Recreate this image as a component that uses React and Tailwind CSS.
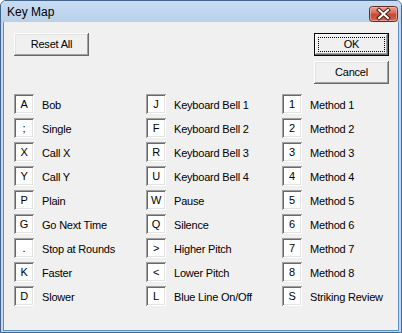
const columns = [
  [
    ['A', 'Bob'],
    [';', 'Single'],
    ['X', 'Call X'],
    ['Y', 'Call Y'],
    ['P', 'Plain'],
    ['G', 'Go Next Time'],
    ['.', 'Stop at Rounds'],
    ['K', 'Faster'],
    ['D', 'Slower'],
  ],
  [
    ['J', 'Keyboard Bell 1'],
    ['F', 'Keyboard Bell 2'],
    ['R', 'Keyboard Bell 3'],
    ['U', 'Keyboard Bell 4'],
    ['W', 'Pause'],
    ['Q', 'Silence'],
    ['>', 'Higher Pitch'],
    ['<', 'Lower Pitch'],
    ['L', 'Blue Line On/Off'],
  ],
  [
    ['1', 'Method 1'],
    ['2', 'Method 2'],
    ['3', 'Method 3'],
    ['4', 'Method 4'],
    ['5', 'Method 5'],
    ['6', 'Method 6'],
    ['7', 'Method 7'],
    ['8', 'Method 8'],
    ['S', 'Striking Review'],
  ],
];

const colWidths = ['w-[132px]', 'w-[136px]', 'flex-1'];

function CloseButton() {
  return (
    <svg width="29" height="16" viewBox="0 0 29 16">
      <defs>
        <linearGradient id="cb" x1="0" y1="0" x2="0" y2="1">
          <stop offset="0" stopColor="#e8a799" />
          <stop offset="0.45" stopColor="#d46a58" />
          <stop offset="0.5" stopColor="#c5462f" />
          <stop offset="1" stopColor="#cf6a55" />
        </linearGradient>
      </defs>
      <rect x="0.5" y="0.5" width="28" height="15" rx="3" fill="url(#cb)" stroke="#6b2a22" />
      <rect x="1.5" y="1.5" width="26" height="13" rx="2" fill="none" stroke="#f2c2b6" strokeOpacity="0.6" />
      {/* X glyph with dark outline */}
      <path d="M10 4 L19 12 M19 4 L10 12" stroke="#4a1c16" strokeWidth="4" strokeLinecap="square" />
      <path d="M10 4 L19 12 M19 4 L10 12" stroke="#ffffff" strokeWidth="2" strokeLinecap="square" />
    </svg>
  );
}

function Button({ children, isDefault = false }) {
  if (isDefault) {
    return (
      <div className="w-[75px] h-[23px] border border-black bg-[#f0f0f0] shadow-[inset_-1px_-1px_#696969,inset_1px_1px_#fff,inset_-2px_-2px_#a0a0a0] p-[3px]">
        <div className="w-full h-full border border-dotted border-black flex items-center justify-center">
          {children}
        </div>
      </div>
    );
  }
  return (
    <div className="w-[75px] h-[23px] bg-[#f0f0f0] shadow-[inset_-1px_-1px_#696969,inset_1px_1px_#fff,inset_-2px_-2px_#a0a0a0,inset_2px_2px_#e3e3e3] flex items-center justify-center">
      {children}
    </div>
  );
}

function KeyRow({ k, label }) {
  return (
    <div className="flex items-center h-[20px]">
      <div className="w-[20px] h-[20px] bg-white shadow-[inset_1px_1px_#a0a0a0,inset_-1px_-1px_#fff,inset_2px_2px_#696969,inset_-2px_-2px_#e3e3e3] flex items-center justify-center pt-[1px]">
        {k}
      </div>
      <span className="ml-[8px] pt-[2px] whitespace-nowrap">{label}</span>
    </div>
  );
}

export default function App() {
  return (
    <div className="w-[402px] h-[333px] flex flex-col rounded-t-[6px] border border-[#44648c] bg-[#c3d7ee] font-['Liberation_Sans',Arial,sans-serif] text-[11px] text-black tracking-[-0.2px]">
      {/* Title bar */}
      <div className="h-[21px] flex items-center justify-between pl-[6px] pr-[3px] rounded-t-[5px] bg-gradient-to-b from-[#c9dcf2] to-[#b9d0ea]">
        <span className="text-[12px] tracking-normal pt-[1px]">Key Map</span>
        <div className="pt-[4px]">
          <CloseButton />
        </div>
      </div>

      {/* Client area */}
      <div className="flex-1 mx-[2px] mb-[1px] border-x border-b border-[#5b8fca] bg-[#f0f0f0] pl-[10px] pr-[9px] pt-[11px]">
        <div className="flex justify-between">
          <Button>Reset All</Button>
          <div className="flex flex-col gap-[5px]">
            <Button isDefault>OK</Button>
            <Button>Cancel</Button>
          </div>
        </div>

        <div className="flex mt-[10px]">
          {columns.map((col, i) => (
            <div key={i} className={`${colWidths[i]} flex flex-col gap-[4px]`}>
              {col.map(([k, label]) => (
                <KeyRow key={label} k={k} label={label} />
              ))}
            </div>
          ))}
        </div>
      </div>
    </div>
  );
}
